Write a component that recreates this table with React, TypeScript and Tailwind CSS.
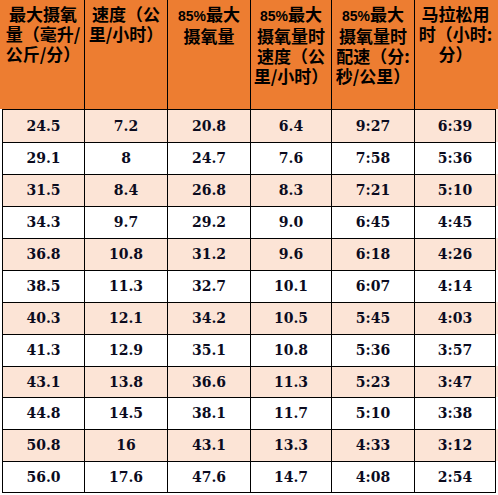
import React from 'react';

const cols = 'grid grid-cols-[82px_83px_83px_81px_83px_82px]';

const pct = <span className="font-['Liberation_Sans'] text-[14px]">85%</span>;

const headers: React.ReactNode[][] = [
  ['最大摄氧', '量（毫升/', '公斤/分）'],
  ['速度（公', '里/小时）'],
  [<>{pct}最大</>, '摄氧量'],
  [<>{pct}最大</>, '摄氧量时', '速度（公', '里/小时）'],
  [<>{pct}最大</>, '摄氧量时', '配速（分:', '秒/公里）'],
  ['马拉松用', '时（小时:', '分）'],
];

const rows = [
  ['24.5', '7.2', '20.8', '6.4', '9:27', '6:39'],
  ['29.1', '8', '24.7', '7.6', '7:58', '5:36'],
  ['31.5', '8.4', '26.8', '8.3', '7:21', '5:10'],
  ['34.3', '9.7', '29.2', '9.0', '6:45', '4:45'],
  ['36.8', '10.8', '31.2', '9.6', '6:18', '4:26'],
  ['38.5', '11.3', '32.7', '10.1', '6:07', '4:14'],
  ['40.3', '12.1', '34.2', '10.5', '5:45', '4:03'],
  ['41.3', '12.9', '35.1', '10.8', '5:36', '3:57'],
  ['43.1', '13.8', '36.6', '11.3', '5:23', '3:47'],
  ['44.8', '14.5', '38.1', '11.7', '5:10', '3:38'],
  ['50.8', '16', '43.1', '13.3', '4:33', '3:12'],
  ['56.0', '17.6', '47.6', '14.7', '4:08', '2:54'],
];

// row heights follow the grid lines in the sheet
const heights = [
  'h-[33px]', 'h-[32px]', 'h-[32px]', 'h-[32px]', 'h-[32px]', 'h-[32px]',
  'h-[32px]', 'h-[32px]', 'h-[31px]', 'h-[32px]', 'h-[32px]', 'h-[32px]',
];

export default function App() {
  return (
    <div className="w-[498px] h-[495px] bg-white overflow-hidden">
      {/* header band */}
      <div className="h-[109px] bg-[#ed7d31]">
        <div className={`${cols} ml-[2px] h-full`}>
          {headers.map((lines, i) => (
            <div key={i} className={`${i > 0 ? 'border-l border-black' : ''} pt-[4px]`}>
              <p className="text-center text-[17px] leading-[20px] font-bold text-black whitespace-nowrap font-['Noto_Sans_CJK_SC',sans-serif]">
                {lines.map((l, j) => (
                  <React.Fragment key={j}>
                    {j > 0 && <br />}
                    {l}
                  </React.Fragment>
                ))}
              </p>
            </div>
          ))}
        </div>
      </div>

      {/* data rows */}
      <div className="ml-[2px]">
        {rows.map((r, i) => (
          <div
            key={i}
            className={`${cols} ${heights[i]} ${i % 2 === 0 ? 'bg-[#fce4d6]' : 'bg-white'}`}
          >
            {r.map((v, j) => (
              <div
                key={j}
                className={`flex items-center justify-center border-l border-t border-black ${j === 5 ? 'border-r' : ''} ${i === rows.length - 1 ? 'border-b' : ''} font-['DejaVu_Serif',serif] font-bold text-[14px] text-[#0b0b1e]`}
              >
                {v}
              </div>
            ))}
          </div>
        ))}
      </div>
    </div>
  );
}
